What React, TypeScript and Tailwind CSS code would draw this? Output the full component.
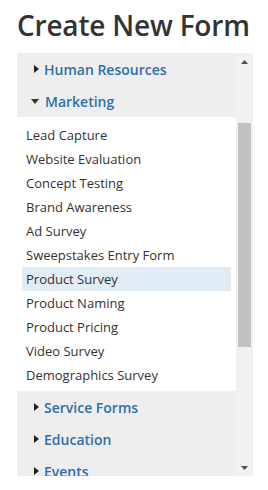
import React from "react";

const items = [
  "Lead Capture",
  "Website Evaluation",
  "Concept Testing",
  "Brand Awareness",
  "Ad Survey",
  "Sweepstakes Entry Form",
  "Product Survey",
  "Product Naming",
  "Product Pricing",
  "Video Survey",
  "Demographics Survey",
];

function Caret({ open }: { open?: boolean }) {
  return open ? (
    <svg width="8" height="5" viewBox="0 0 8 5" className="mr-[6px]">
      <path d="M0 0h8L4 5z" fill="#333" />
    </svg>
  ) : (
    <svg width="5" height="8" viewBox="0 0 5 8" className="mr-[5px] ml-[3px]">
      <path d="M0 0l5 4-5 4z" fill="#222" />
    </svg>
  );
}

function Header({ label, open }: { label: string; open?: boolean }) {
  return (
    <div className="flex h-[32px] items-center pl-[14px] text-[14px] font-semibold text-[#2f6eaa]">
      <Caret open={open} />
      <span>{label}</span>
    </div>
  );
}

export default function App() {
  const selected = "Product Survey";
  return (
    <div className="h-[490px] w-[268px] overflow-hidden bg-white font-['Open_Sans',sans-serif]">
      <h1 className="whitespace-nowrap pl-[17px] pt-[3px] text-[28px] font-semibold leading-[44px] tracking-[-0.2px] text-[#333]">
        Create New Form
      </h1>

      <div className="ml-[17px] mt-[6px] flex h-[423px] w-[236px]">
        <div className="h-full w-[219px] overflow-hidden bg-[#eeeeee]">
          <Header label="Human Resources" />
          <Header label="Marketing" open />
          <ul className="bg-white px-[5px] pb-[4px] pt-[6px]">
            {items.map((it) => (
              <li
                key={it}
                className={
                  "h-[24px] pl-[4px] text-[13px] leading-[24px] text-[#333] " +
                  (it === selected ? "bg-[#e1ecf4]" : "")
                }
              >
                {it}
              </li>
            ))}
          </ul>
          <Header label="Service Forms" />
          <Header label="Education" />
          <Header label="Events" />
        </div>

        {/* scrollbar */}
        <div className="flex h-full w-[17px] flex-col items-center bg-[#f1f1f1]">
          <div className="flex h-[17px] w-full items-center justify-center">
            <svg width="7" height="4" viewBox="0 0 7 4">
              <path d="M3.5 0L7 4H0z" fill="#505050" />
            </svg>
          </div>
          <div className="mt-[53px] h-[224px] w-[13px] bg-[#c1c1c1]" />
          <div className="flex-1" />
          <div className="flex h-[17px] w-full items-center justify-center">
            <svg width="7" height="4" viewBox="0 0 7 4">
              <path d="M0 0h7L3.5 4z" fill="#505050" />
            </svg>
          </div>
        </div>
      </div>
    </div>
  );
}
